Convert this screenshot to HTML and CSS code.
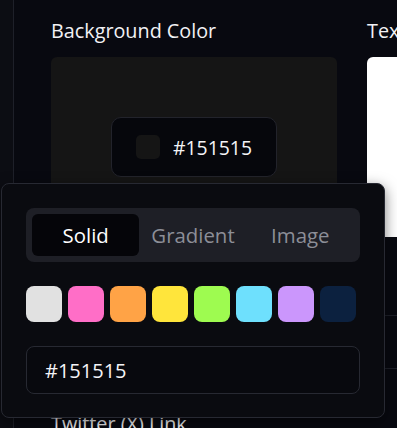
FILE: index.html
```html
<!DOCTYPE html>
<html>
<head>
<meta charset="utf-8">
<link rel="stylesheet" href="styles.css">
</head>
<body>
<div class="app">
  <aside class="sidebar"></aside>
  <main class="main">
    <div class="colors">
      <div class="col">
        <div class="label">Background Color</div>
        <div class="preview bg">
          <div class="pill">
            <span class="chip"></span>
            <span class="pill-text">#151515</span>
          </div>
        </div>
      </div>
      <div class="col">
        <div class="label">Text Color</div>
        <div class="preview fg"></div>
      </div>
    </div>
    <div class="field">
      <div class="field-input"></div>
    </div>
    <div class="label twitter">Twitter (X) Link</div>
  </main>
</div>

<div class="popover">
  <div class="tabs">
    <div class="tab active">Solid</div>
    <div class="tab">Gradient</div>
    <div class="tab">Image</div>
  </div>
  <div class="swatches">
    <span class="sw" style="background:#e1e1e1"></span>
    <span class="sw" style="background:#ff6ec7"></span>
    <span class="sw" style="background:#ffa346"></span>
    <span class="sw" style="background:#ffe53b"></span>
    <span class="sw" style="background:#9efb50"></span>
    <span class="sw" style="background:#6ee0fd"></span>
    <span class="sw" style="background:#cb96fc"></span>
    <span class="sw" style="background:#0c213f"></span>
  </div>
  <div class="hex-input">#151515</div>
</div>
</body>
</html>
```

FILE: styles.css
```css
* { box-sizing: border-box; }
html, body {
  margin: 0;
  padding: 0;
  background: #080910;
  width: 397px;
  height: 428px;
  overflow: hidden;
  font-family: "Open Sans", "Noto Sans", sans-serif;
  color: #f2f2f5;
}
.app {
  display: flex;
  width: 397px;
  height: 428px;
  overflow: hidden;
}
.sidebar {
  width: 14px;
  flex: none;
  background: #0c0d13;
  border-right: 1px solid #1e2029;
}
.main {
  flex: 1;
  min-width: 0;
  padding: 16px 0 0 37px;
  display: flex;
  flex-direction: column;
}
.colors {
  display: flex;
  gap: 30px;
}
.col {
  display: flex;
  flex-direction: column;
  gap: 12px;
  flex: none;
}
.col:first-child { width: 286px; }
.col:last-child { width: 200px; }
.label {
  font-size: 19.8px;
  line-height: 29px;
  white-space: nowrap;
}
.preview {
  height: 180px;
  border-radius: 6px;
  display: flex;
  align-items: center;
  justify-content: center;
}
.preview.bg { background: #151515; }
.preview.fg { background: #ffffff; }
.pill {
  width: 166px;
  height: 60px;
  background: #06070c;
  border: 1px solid #22232b;
  border-radius: 10px;
  display: flex;
  align-items: center;
  padding-left: 24px;
  gap: 13px;
}
.chip {
  width: 24px;
  height: 24px;
  border-radius: 5px;
  background: #151515;
}
.pill-text {
  font-size: 19.4px;
  color: #f4f4f7;
}
.field {
  margin-top: 78px;
  width: 400px;
}
.field-input {
  height: 54px;
  border: 1px solid #1e2029;
  border-radius: 8px;
}
.twitter {
  margin-top: 40px;
}
.popover {
  position: absolute;
  left: 1px;
  top: 183px;
  width: 384px;
  height: 235px;
  background: #0a0b10;
  border: 1px solid #272932;
  border-radius: 8px;
  padding: 24px 24px 0 24px;
  display: flex;
  flex-direction: column;
  box-shadow: 0 4px 14px rgba(0,0,0,0.5);
}
.tabs {
  height: 54px;
  background: #1e1f26;
  border-radius: 8px;
  padding: 6px;
  display: flex;
}
.tab {
  flex: 1;
  display: flex;
  align-items: center;
  justify-content: center;
  font-size: 20.4px;
  color: #8c8e97;
  border-radius: 6px;
}
.tab.active {
  background: #050509;
  color: #ffffff;
}
.swatches {
  margin-top: 24px;
  display: flex;
  gap: 6px;
}
.sw {
  width: 36px;
  height: 36px;
  border-radius: 8px;
  flex: none;
}
.hex-input {
  margin-top: 24px;
  height: 48px;
  border: 1px solid #272932;
  border-radius: 8px;
  background: #08090e;
  display: flex;
  align-items: center;
  padding-left: 18px;
  font-size: 20px;
  color: #f4f4f7;
}
```
